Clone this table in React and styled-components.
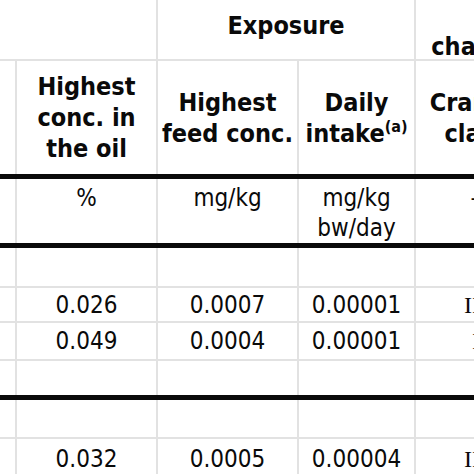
import React from 'react';
import styled, { createGlobalStyle } from 'styled-components';

const GlobalStyle = createGlobalStyle`
  html, body {
    margin: 0;
    padding: 0;
    background: #ffffff;
  }
`;

const GRID = '#e2e2e2';
const INK = '#0a0a0a';

const cols = [17, 141, 141, 117, 122, 240];

function C({ children, ...rest }) {
  return (
    <Cell {...rest}>
      <Label>{children}</Label>
    </Cell>
  );
}

function Table() {
  return (
    <Sheet>
      <Grid>
        <Row height={61}>
          <C width={cols[0] + cols[1]} />
          <C width={cols[2] + cols[3]} head pad="0 0 8px">
            Exposure
          </C>
          <C width={240} head pad="3px 0 0">
            Hazard
            <br />
            characterisation
          </C>
          <C width={200} />
        </Row>

        <Row height={118} rule="thick">
          <C width={cols[0]} />
          <C width={cols[1]} head>
            Highest
            <br />
            conc. in
            <br />
            the oil
          </C>
          <C width={cols[2]} head>
            Highest
            <br />
            feed conc.
          </C>
          <C width={cols[3]} head>
            Daily
            <br />
            intake<Sup>(a)</Sup>
          </C>
          <C width={cols[4]} head>
            Cramer
            <br />
            class
          </C>
          <C width={cols[5]} head />
        </Row>

        <Row height={69} rule="thick">
          <C width={cols[0]} />
          <C width={cols[1]} top>%</C>
          <C width={cols[2]} top>mg/kg</C>
          <C width={cols[3]} top>
            mg/kg
            <br />
            bw/day
          </C>
          <C width={cols[4]} top>–</C>
          <C width={cols[5]} top />
        </Row>

        <DataRow height={40} values={[]} />
        <DataRow height={35} values={['0.026', '0.0007', '0.00001', 'III']} />
        <DataRow height={38} values={['0.049', '0.0004', '0.00001', 'I']} />
        <DataRow height={39} rule="thick" values={[]} />
        <DataRow height={39} values={[]} />
        <DataRow height={40} rule="none" values={['0.032', '0.0005', '0.00004', 'III']} />
      </Grid>
    </Sheet>
  );
}

function DataRow({ height, rule = 'thin', values }) {
  return (
    <Row height={height} rule={rule}>
      <C width={cols[0]} />
      <C width={cols[1]}>{values[0]}</C>
      <C width={cols[2]}>{values[1]}</C>
      <C width={cols[3]}>{values[2]}</C>
      <C width={cols[4]} roman>
        {values[3]}
      </C>
      <C width={cols[5]} />
    </Row>
  );
}

export default function App() {
  return (
    <>
      <GlobalStyle />
      <Table />
    </>
  );
}

const Sheet = styled.div`
  width: 474px;
  height: 474px;
  overflow: hidden;
  background: #ffffff;
  color: ${INK};
  font-family: 'DejaVu Sans Condensed', 'DejaVu Sans', sans-serif;
  font-stretch: condensed;
`;

const Grid = styled.div`
  width: 900px;
  display: flex;
  flex-direction: column;
`;

const Row = styled.div`
  display: flex;
  box-sizing: border-box;
  height: ${(p) => p.height}px;
  border-bottom: ${(p) =>
    p.rule === 'thick'
      ? `5px solid ${INK}`
      : p.rule === 'none'
      ? '0'
      : `2px solid ${GRID}`};
`;

const Cell = styled.div`
  box-sizing: border-box;
  flex: 0 0 ${(p) => p.width}px;
  height: 100%;
  border-right: 2px solid ${GRID};
  display: flex;
  justify-content: center;
  align-items: ${(p) => (p.top ? 'flex-start' : 'center')};
  padding: ${(p) => p.pad || (p.top ? '4px 0 0' : '0')};
  text-align: center;
  white-space: nowrap;
  font-size: ${(p) => (p.head ? 25 : 24)}px;
  font-weight: ${(p) => (p.head ? 700 : 400)};
  line-height: ${(p) => (p.head ? 31 : 30)}px;
  font-family: ${(p) => (p.roman ? "'Liberation Serif', serif" : 'inherit')};
`;

const Label = styled.span`
  display: block;
`;

const Sup = styled.sup`
  font-size: 16px;
  line-height: 0;
  vertical-align: 10px;
`;
